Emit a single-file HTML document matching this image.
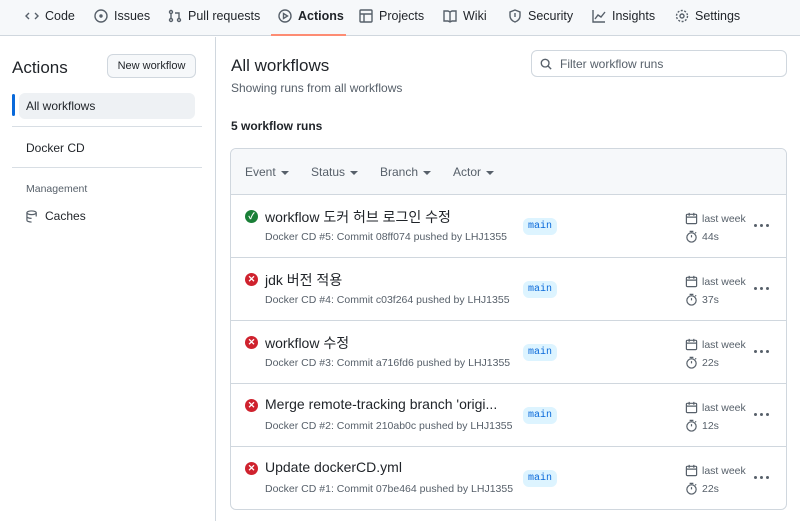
<!DOCTYPE html>
<html><head><meta charset="utf-8"><style>
*{box-sizing:border-box;margin:0;padding:0}
body{width:800px;height:521px;overflow:hidden;background:#fff;font-family:"Liberation Sans","Noto Sans CJK KR",sans-serif;color:#1f2328;font-size:12px;position:relative}
.nav{position:absolute;left:0;top:0;width:800px;height:36px;background:#f6f8fa;border-bottom:1px solid #d0d7de}
.nav .it{position:absolute;top:9px;font-size:12.5px;color:#1f2328;display:flex;align-items:center;gap:6px}
.nav svg{width:14px;height:14px;fill:none;stroke:#57606a;stroke-width:1.4}
.ul{position:absolute;left:271px;top:34px;width:75px;height:2px;background:#fd8c73}
.side{position:absolute;left:0;top:37px;width:216px;height:484px;border-right:1px solid #d0d7de}
.abs{position:absolute}
.btn{position:absolute;left:107px;top:54px;width:89px;height:24px;border:1px solid #d0d7de;border-radius:6px;background:#f6f8fa;font-size:11px;text-align:center;line-height:22px}
.box{position:absolute;left:230px;top:148px;width:557px;height:362px;border:1px solid #d0d7de;border-radius:6px;overflow:hidden}
.hdr{height:46px;background:#f6f8fa;border-bottom:1px solid #d0d7de;position:relative}
.hdr span{position:absolute;top:16px;font-size:12px;color:#57606a}
.hdr span:after{content:"";display:inline-block;margin-left:5px;border:4px solid transparent;border-top-color:#57606a;vertical-align:1px;border-bottom:0}
.row{height:63px;border-bottom:1px solid #d0d7de;position:relative}
.row:last-child{border-bottom:0}
.st{position:absolute;left:14px;top:15px;width:13px;height:13px;border-radius:50%;color:#fff;font-size:9px;line-height:13px;text-align:center;font-weight:bold}
.t{position:absolute;left:34px;top:12px;font-size:14px;color:#1f2328}
.s{position:absolute;left:34px;top:36px;font-size:10.5px;color:#57606a}
.m{position:absolute;left:292px;top:23px;background:#ddf4ff;color:#0969da;font-family:"Liberation Mono",monospace;font-size:10px;padding:3px 5px;border-radius:6px}
.d{position:absolute;left:454px;font-size:10.5px;color:#57606a;display:flex;align-items:center;gap:4px}
.d svg{width:13px;height:13px;fill:none;stroke:#57606a;stroke-width:1.3}
.dots{position:absolute;left:523px;top:29px;display:flex;gap:3px}
.dots i{width:3px;height:3px;border-radius:50%;background:#57606a}
</style></head><body>
<div class="nav">
<div class="it" style="left:25px"><svg viewBox="0 0 14 14"><path d="M4 4L1 7l3 3M10 4l3 3-3 3"/></svg>Code</div>
<div class="it" style="left:94px"><svg viewBox="0 0 14 14"><circle cx="7" cy="7" r="6"/><circle cx="7" cy="7" r="1" fill="#57606a"/></svg>Issues</div>
<div class="it" style="left:168px"><svg viewBox="0 0 14 14"><circle cx="3" cy="3" r="1.5"/><circle cx="3" cy="11" r="1.5"/><circle cx="11" cy="11" r="1.5"/><path d="M3 4.5v5M11 9.5V4H7"/></svg>Pull requests</div>
<div class="it" style="left:278px;font-weight:bold"><svg viewBox="0 0 14 14"><circle cx="7" cy="7" r="6"/><path d="M5.5 4.5v5l4-2.5z"/></svg>Actions</div>
<div class="it" style="left:359px"><svg viewBox="0 0 14 14"><rect x="1" y="1" width="12" height="12" rx="1"/><path d="M1 5h12M5 5v8"/></svg>Projects</div>
<div class="it" style="left:443px"><svg viewBox="0 0 14 14"><path d="M1 2h4l2 1 2-1h4v10H9l-2 1-2-1H1zM7 3v10"/></svg>Wiki</div>
<div class="it" style="left:508px"><svg viewBox="0 0 14 14"><path d="M7 1l5 2v4c0 3-2.5 5-5 6-2.5-1-5-3-5-6V3z"/><path d="M7 4v4"/></svg>Security</div>
<div class="it" style="left:592px"><svg viewBox="0 0 14 14"><path d="M1 1v12h12M3 10l3-4 3 2 4-5"/></svg>Insights</div>
<div class="it" style="left:675px"><svg viewBox="0 0 14 14"><circle cx="7" cy="7" r="2"/><circle cx="7" cy="7" r="5.5" stroke-dasharray="2 1.5"/></svg>Settings</div>
<div class="ul"></div>
</div>
<div class="side">
<div class="abs" style="left:12px;top:21px;font-size:17px">Actions</div>
<div class="abs" style="left:12px;top:57px;width:3px;height:22px;background:#0969da;border-radius:2px"></div>
<div class="abs" style="left:19px;top:56px;width:176px;height:26px;background:#eef1f4;border-radius:6px;font-size:12px;padding:6px 7px">All workflows</div>
<div class="abs" style="left:12px;top:89px;width:190px;height:1px;background:#d8dee4"></div>
<div class="abs" style="left:26px;top:104px;font-size:12px">Docker CD</div>
<div class="abs" style="left:12px;top:130px;width:190px;height:1px;background:#d8dee4"></div>
<div class="abs" style="left:26px;top:146px;font-size:10.5px;color:#57606a">Management</div>
<div class="abs" style="left:26px;top:172px;font-size:12px;display:flex;gap:6px;align-items:center"><svg width="13" height="13" viewBox="0 0 14 14" fill="none" stroke="#57606a" stroke-width="1.3"><ellipse cx="6" cy="3" rx="5" ry="2"/><path d="M1 3v8c0 1 2 2 5 2M11 3v4M1 7c0 1 2 2 5 2"/></svg>Caches</div>
</div>
<div class="btn">New workflow</div>
<div class="abs" style="left:231px;top:56px;font-size:17px">All workflows</div>
<div class="abs" style="left:231px;top:81px;font-size:12px;color:#57606a">Showing runs from all workflows</div>
<div class="abs" style="left:231px;top:119px;font-size:12px;font-weight:bold">5 workflow runs</div>
<div class="abs" style="left:531px;top:50px;width:256px;height:27px;border:1px solid #d0d7de;border-radius:6px;font-size:12px;color:#57606a;padding:6px 0 0 28px">Filter workflow runs
<svg class="abs" style="left:8px;top:7px" width="12" height="12" viewBox="0 0 14 14" fill="none" stroke="#57606a" stroke-width="1.6"><circle cx="6" cy="6" r="4.5"/><path d="M9.5 9.5L13 13"/></svg></div>
<div class="box">
<div class="hdr"><span style="left:14px">Event</span><span style="left:80px">Status</span><span style="left:149px">Branch</span><span style="left:222px">Actor</span></div>
<div class="row"><div class="st" style="background:#1a7f37">✓</div><div class="t">workflow 도커 허브 로그인 수정</div><div class="s">Docker CD #5: Commit 08ff074 pushed by LHJ1355</div><div class="m">main</div><div class="d" style="top:17px"><svg viewBox="0 0 14 14"><rect x="1.5" y="2.5" width="11" height="10" rx="1"/><path d="M1.5 5.5h11M4.5 1v3M9.5 1v3"/></svg>last week</div><div class="d" style="top:35px"><svg viewBox="0 0 14 14"><circle cx="7" cy="8" r="5"/><path d="M7 8V5.5M5 1.5h4M11 3.5l1-1"/></svg>44s</div><div class="dots"><i></i><i></i><i></i></div></div>
<div class="row"><div class="st" style="background:#cf222e">✕</div><div class="t">jdk 버전 적용</div><div class="s">Docker CD #4: Commit c03f264 pushed by LHJ1355</div><div class="m">main</div><div class="d" style="top:17px"><svg viewBox="0 0 14 14"><rect x="1.5" y="2.5" width="11" height="10" rx="1"/><path d="M1.5 5.5h11M4.5 1v3M9.5 1v3"/></svg>last week</div><div class="d" style="top:35px"><svg viewBox="0 0 14 14"><circle cx="7" cy="8" r="5"/><path d="M7 8V5.5M5 1.5h4M11 3.5l1-1"/></svg>37s</div><div class="dots"><i></i><i></i><i></i></div></div>
<div class="row"><div class="st" style="background:#cf222e">✕</div><div class="t">workflow 수정</div><div class="s">Docker CD #3: Commit a716fd6 pushed by LHJ1355</div><div class="m">main</div><div class="d" style="top:17px"><svg viewBox="0 0 14 14"><rect x="1.5" y="2.5" width="11" height="10" rx="1"/><path d="M1.5 5.5h11M4.5 1v3M9.5 1v3"/></svg>last week</div><div class="d" style="top:35px"><svg viewBox="0 0 14 14"><circle cx="7" cy="8" r="5"/><path d="M7 8V5.5M5 1.5h4M11 3.5l1-1"/></svg>22s</div><div class="dots"><i></i><i></i><i></i></div></div>
<div class="row"><div class="st" style="background:#cf222e">✕</div><div class="t">Merge remote-tracking branch 'origi...</div><div class="s">Docker CD #2: Commit 210ab0c pushed by LHJ1355</div><div class="m">main</div><div class="d" style="top:17px"><svg viewBox="0 0 14 14"><rect x="1.5" y="2.5" width="11" height="10" rx="1"/><path d="M1.5 5.5h11M4.5 1v3M9.5 1v3"/></svg>last week</div><div class="d" style="top:35px"><svg viewBox="0 0 14 14"><circle cx="7" cy="8" r="5"/><path d="M7 8V5.5M5 1.5h4M11 3.5l1-1"/></svg>12s</div><div class="dots"><i></i><i></i><i></i></div></div>
<div class="row"><div class="st" style="background:#cf222e">✕</div><div class="t">Update dockerCD.yml</div><div class="s">Docker CD #1: Commit 07be464 pushed by LHJ1355</div><div class="m">main</div><div class="d" style="top:17px"><svg viewBox="0 0 14 14"><rect x="1.5" y="2.5" width="11" height="10" rx="1"/><path d="M1.5 5.5h11M4.5 1v3M9.5 1v3"/></svg>last week</div><div class="d" style="top:35px"><svg viewBox="0 0 14 14"><circle cx="7" cy="8" r="5"/><path d="M7 8V5.5M5 1.5h4M11 3.5l1-1"/></svg>22s</div><div class="dots"><i></i><i></i><i></i></div></div>
</div>
</body></html>
